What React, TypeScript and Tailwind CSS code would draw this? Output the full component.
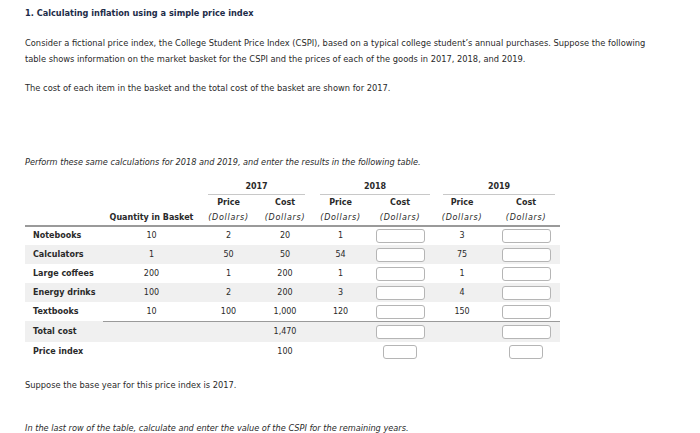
const rows = [
  { name: "Notebooks", qty: "10", p17: "2", c17: "20", p18: "1", p19: "3" },
  { name: "Calculators", qty: "1", p17: "50", c17: "50", p18: "54", p19: "75" },
  { name: "Large coffees", qty: "200", p17: "1", c17: "200", p18: "1", p19: "1" },
  { name: "Energy drinks", qty: "100", p17: "2", c17: "200", p18: "3", p19: "4" },
  { name: "Textbooks", qty: "10", p17: "100", c17: "1,000", p18: "120", p19: "150" },
]

function Box({ small }: { small?: boolean }) {
  return (
    <div
      className={
        small
          ? "mx-auto h-[14px] w-[34px] rounded-[3px] border border-[#b5b5b5] bg-white"
          : "mx-auto h-[14px] w-[49px] rounded-[3px] border border-[#b5b5b5] bg-white"
      }
    />
  )
}

function Dollars() {
  return <th className="font-normal italic tracking-[0.7px]">(Dollars)</th>
}

export default function App() {
  return (
    <div
      className="h-[433px] w-[700px] overflow-hidden bg-white pl-[25px] text-[8px] text-[#2a2a2a]"
      style={{ fontFamily: '"DejaVu Sans", Verdana, sans-serif' }}
    >
      <h1 className="pt-[8px] text-[8.2px] font-bold leading-[10px] text-[#1d2c48]">
        1. Calculating inflation using a simple price index
      </h1>
      <p className="mt-[17px] w-[636px] text-[8.3px] leading-[16px]">
        Consider a fictional price index, the College Student Price Index (CSPI), based on a typical
        college student’s annual purchases. Suppose the following table shows information on the
        market basket for the CSPI and the prices of each of the goods in 2017, 2018, and 2019.
      </p>
      <p className="mt-[13px] text-[8.3px] leading-[16px]">
        The cost of each item in the basket and the total cost of the basket are shown for 2017.
      </p>
      <p className="mt-[58px] text-[8.2px] italic leading-[16px]">
        Perform these same calculations for 2018 and 2019, and enter the results in the following
        table.
      </p>

      <table className="mt-[12px] w-[535px] table-fixed border-collapse leading-[10px]">
        <colgroup>
          <col className="w-[78px]" />
          <col className="w-[97px]" />
          <col className="w-[57px]" />
          <col className="w-[56px]" />
          <col className="w-[55px]" />
          <col className="w-[64px]" />
          <col className="w-[60px]" />
          <col className="w-[68px]" />
        </colgroup>
        <thead>
          <tr className="h-[14px]">
            <th colSpan={2} />
            <th colSpan={2} className="px-[8px] align-top">
              <div className="border-b border-[#c8c8c8] pb-[2px] font-bold">2017</div>
            </th>
            <th colSpan={2} className="pl-[7px] pr-[2px] align-top">
              <div className="border-b border-[#c8c8c8] pb-[2px] font-bold">2018</div>
            </th>
            <th colSpan={2} className="pl-[11px] pr-[5px] align-top">
              <div className="border-b border-[#c8c8c8] pb-[2px] font-bold">2019</div>
            </th>
          </tr>
          <tr className="h-[14px] font-bold">
            <th colSpan={2} />
            <th>Price</th>
            <th>Cost</th>
            <th>Price</th>
            <th>Cost</th>
            <th>Price</th>
            <th>Cost</th>
          </tr>
          <tr className="h-[16px] border-b-2 border-[#9a9a9a]">
            <th />
            <th className="font-bold">Quantity in Basket</th>
            <Dollars />
            <Dollars />
            <Dollars />
            <Dollars />
            <Dollars />
            <Dollars />
          </tr>
        </thead>
        <tbody>
          {rows.map((r, i) => (
            <tr key={r.name} className={i % 2 === 1 ? "h-[19px] bg-[#f0f0f0]" : "h-[19px]"}>
              <td className="pl-[8px] font-bold">{r.name}</td>
              <td className="text-center">{r.qty}</td>
              <td className="text-center">{r.p17}</td>
              <td className="text-center">{r.c17}</td>
              <td className="text-center">{r.p18}</td>
              <td>
                <Box />
              </td>
              <td className="text-center">{r.p19}</td>
              <td>
                <Box />
              </td>
            </tr>
          ))}
          <tr className="h-[21px] bg-[#f0f0f0]">
            <td className="pl-[8px] font-bold">Total cost</td>
            <td colSpan={7} className="p-0">
              <div className="flex h-[21px] items-center border-t border-[#9a9a9a]">
                <div className="w-[97px]" />
                <div className="w-[57px]" />
                <div className="w-[56px] text-center">1,470</div>
                <div className="w-[55px]" />
                <div className="w-[64px]">
                  <Box />
                </div>
                <div className="w-[60px]" />
                <div className="w-[68px]">
                  <Box />
                </div>
              </div>
            </td>
          </tr>
          <tr className="h-[20px]">
            <td className="pl-[8px] font-bold">Price index</td>
            <td />
            <td />
            <td className="text-center">100</td>
            <td />
            <td>
              <Box small />
            </td>
            <td />
            <td>
              <Box small />
            </td>
          </tr>
        </tbody>
      </table>

      <p className="mt-[15px] text-[8.3px] leading-[16px]">
        Suppose the base year for this price index is 2017.
      </p>
      <p className="mt-[27px] text-[8.2px] italic leading-[16px]">
        In the last row of the table, calculate and enter the value of the CSPI for the remaining
        years.
      </p>
    </div>
  )
}
